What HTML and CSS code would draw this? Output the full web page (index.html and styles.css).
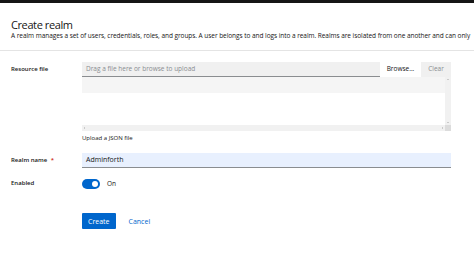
FILE: index.html
```html
<!DOCTYPE html>
<html>
<head>
<meta charset="utf-8">
<link rel="stylesheet" href="styles.css">
</head>
<body>
<div class="topbar"></div>
<header class="page-header">
  <h1 class="title">Create realm</h1>
  <p class="desc">A realm manages a set of users, credentials, roles, and groups. A user belongs to and logs into a realm. Realms are isolated from one another and can only</p>
</header>
<main class="form">
  <div class="row row-file">
    <div class="label">Resource file</div>
    <div class="control">
      <div class="upload">
        <div class="upload-bar">
          <div class="upload-input">Drag a file here or browse to upload</div>
          <div class="btn-browse">Browse...</div>
          <div class="btn-clear">Clear</div>
        </div>
        <div class="textarea">
          <div class="ta-main">
            <div class="ta-body"><div class="ta-band"></div></div>
            <div class="vscroll"><span class="arrow-up"></span><span class="arrow-down"></span></div>
          </div>
          <div class="ta-foot">
            <div class="hscroll"><span class="arrow-left"></span><span class="arrow-right"></span></div>
            <div class="corner"></div>
          </div>
        </div>
      </div>
      <div class="helper">Upload a JSON file</div>
    </div>
  </div>
  <div class="row row-name">
    <div class="label">Realm name <span class="req">*</span></div>
    <div class="control">
      <div class="text-input">Adminforth</div>
    </div>
  </div>
  <div class="row row-enabled">
    <div class="label">Enabled</div>
    <div class="control switch-wrap">
      <span class="switch"><span class="knob"></span></span>
      <span class="switch-label">On</span>
    </div>
  </div>
  <div class="actions">
    <button class="btn-primary">Create</button>
    <button class="btn-link">Cancel</button>
  </div>
</main>
</body>
</html>
```

FILE: styles.css
```css
* { box-sizing: border-box; }
html, body { margin: 0; padding: 0; }
body {
  width: 474px;
  height: 263px;
  overflow: hidden;
  background: #fff;
  font-family: "Open Sans", "Liberation Sans", sans-serif;
  color: #151515;
}
.topbar { height: 3px; background: #151515; }
.page-header {
  padding: 15px 11px 10px;
  border-bottom: 1px solid #e4e4e4;
}
.title {
  margin: 0;
  font-size: 11px;
  font-weight: 400;
  line-height: 13px;
  letter-spacing: -0.4px;
}
.desc {
  margin: 1px 0 0;
  font-size: 6.5px;
  line-height: 8px;
  white-space: nowrap;
  letter-spacing: -0.05px;
  color: #151515;
}
.form { padding: 11px 0 0 11px; }
.row {
  display: grid;
  grid-template-columns: 71px 369px;
}
.label {
  font-size: 6px;
  font-weight: 600;
  line-height: 15px;
}
.req { color: #c9190b; margin-left: 2px; }
.upload-bar { display: flex; height: 15px; }
.upload-input {
  flex: 1;
  background: #f0f0f0;
  border-bottom: 1px solid #8a8d90;
  font-size: 6.5px;
  line-height: 14px;
  padding-left: 4px;
  color: #8a8d90;
}
.btn-browse {
  width: 41px;
  background: #fff;
  font-size: 6.5px;
  line-height: 14px;
  text-align: center;
  color: #151515;
}
.btn-clear {
  width: 30px;
  background: #f0f0f0;
  font-size: 6.5px;
  line-height: 14px;
  text-align: center;
  color: #8a8d90;
}
.textarea { height: 54px; display: flex; flex-direction: column; background: #fff; }
.ta-main { flex: 1; display: flex; }
.ta-body { flex: 1; }
.ta-band { height: 16px; background: #f5f5f5; }
.vscroll {
  width: 6px;
  background: #f1f1f1;
  position: relative;
}
.ta-foot { height: 6px; display: flex; }
.hscroll { flex: 1; background: #f1f1f1; position: relative; }
.corner { width: 6px; background: #dcdcdc; }
.arrow-up, .arrow-down, .arrow-left, .arrow-right {
  position: absolute;
  width: 0; height: 0;
  border: 1.5px solid transparent;
}
.arrow-up { top: 1px; left: 1.5px; border-bottom-color: #a3a3a3; }
.arrow-down { bottom: 1px; left: 1.5px; border-top-color: #a3a3a3; }
.arrow-left { left: 1px; top: 1.5px; border-right-color: #a3a3a3; }
.arrow-right { right: 1px; top: 1.5px; border-left-color: #a3a3a3; }
.helper {
  font-size: 6px;
  line-height: 8px;
  margin-top: 3px;
  color: #151515;
}
.row-name { margin-top: 11px; }
.text-input {
  height: 15px;
  background: #e8f0fe;
  border-bottom: 1px solid #8a8d90;
  font-size: 7px;
  line-height: 14px;
  padding-left: 4px;
}
.row-enabled { margin-top: 10px; }
.switch-wrap { display: flex; align-items: center; height: 11px; }
.row-enabled .label { line-height: 11px; }
.switch {
  width: 18px; height: 10px;
  border-radius: 5px;
  background: #0066cc;
  display: flex;
  align-items: center;
  justify-content: flex-end;
  padding-right: 2px;
}
.knob { width: 6px; height: 6px; border-radius: 50%; background: #fff; }
.switch-label { font-size: 6.5px; margin-left: 7px; color: #151515; }
.actions {
  margin: 24px 0 0 71px;
  display: flex;
  align-items: center;
  gap: 3px;
}
.btn-primary {
  height: 16px;
  padding: 0 6px;
  border: 0;
  border-radius: 1px;
  background: #0066cc;
  color: #fff;
  font-family: inherit;
  font-size: 7px;
}
.btn-link {
  height: 16px;
  padding: 0 10px;
  border: 0;
  background: transparent;
  color: #0066cc;
  font-family: inherit;
  font-size: 7px;
}
```
